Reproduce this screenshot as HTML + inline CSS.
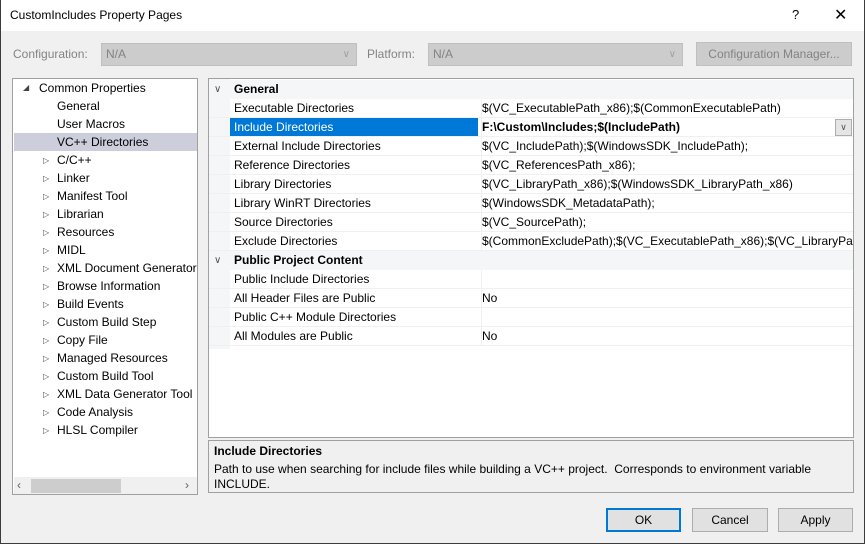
<!DOCTYPE html>
<html><head><style>
*{margin:0;padding:0;box-sizing:border-box}
body{width:865px;height:544px;background:#f0f0f0;font-family:"Liberation Sans",sans-serif;font-size:12px;color:#000;position:relative;overflow:hidden}
.a{position:absolute;white-space:nowrap}
.win{position:absolute;left:0;top:0;width:865px;height:544px;border:1px solid #3c3c3c;border-top:none}
.combo{position:absolute;height:23px;background:#cccccc;border:1px solid #bfbfbf;color:#838383;padding:3px 4px;line-height:15px}
.combo .ch{position:absolute;right:6px;top:3px;color:#a0a0a0;font-size:10px}
.btn{position:absolute;height:24px;background:#e1e1e1;border:1px solid #adadad;text-align:center;line-height:22px}
.tree{position:absolute;left:12px;top:78px;width:186px;height:417px;background:#fff;border:1px solid #a0a0a0}
.ti{position:absolute;height:18px;line-height:18px}
.tri{position:absolute;font-size:8px;color:#444}
.grid{position:absolute;left:208px;top:78px;width:646px;height:360px;background:#fff;border:1px solid #a0a0a0;overflow:hidden}
.row{position:absolute;left:0;width:644px;height:19px;line-height:19px;border-bottom:1px solid #f0f0f0}
.row .n{position:absolute;left:25px}
.row .v{position:absolute;left:272px;border-left:1px solid #f0f0f0;padding-left:0;height:18px}
.gut{position:absolute;left:0;top:0;width:21px;height:270px;background:#f5f6f8}
.hdr{position:absolute;left:0;width:644px;height:19px;background:#f5f6f8;line-height:19px;font-weight:bold}
</style></head><body>
<div style="position:absolute;left:0;top:0;width:865px;height:31px;background:#fff"></div>
<div class="win"></div>
<div class="a" style="left:10px;top:8px;font-size:12px">CustomIncludes Property Pages</div>
<div class="a" style="left:792px;top:7px;font-size:13px">?</div>
<div class="a" style="left:834px;top:5px;font-size:16px">✕</div>

<div class="a" style="left:13px;top:47px;color:#838383">Configuration:</div>
<div class="combo" style="left:101px;top:43px;width:256px">N/A<span class="ch">&#8744;</span></div>
<div class="a" style="left:367px;top:47px;color:#838383">Platform:</div>
<div class="combo" style="left:428px;top:43px;width:255px">N/A<span class="ch">&#8744;</span></div>
<div class="btn" style="left:696px;top:42px;width:156px;background:#cccccc;border-color:#bfbfbf;color:#838383">Configuration Manager...</div>

<div class="tree">
<div class="tri" style="left:10px;top:4px">◢</div>
<div class="ti" style="left:26px;top:0">Common Properties</div>
<div class="ti" style="left:44px;top:18px">General</div>
<div class="ti" style="left:44px;top:36px">User Macros</div>
<div class="ti" style="left:1px;top:54px;width:183px;background:#cccedb;padding-left:43px">VC++ Directories</div>
<div class="ti" style="left:44px;top:72px">C/C++</div>
<div class="ti" style="left:44px;top:90px">Linker</div>
<div class="ti" style="left:44px;top:108px">Manifest Tool</div>
<div class="ti" style="left:44px;top:126px">Librarian</div>
<div class="ti" style="left:44px;top:144px">Resources</div>
<div class="ti" style="left:44px;top:162px">MIDL</div>
<div class="ti" style="left:44px;top:180px">XML Document Generator</div>
<div class="ti" style="left:44px;top:198px">Browse Information</div>
<div class="ti" style="left:44px;top:216px">Build Events</div>
<div class="ti" style="left:44px;top:234px">Custom Build Step</div>
<div class="ti" style="left:44px;top:252px">Copy File</div>
<div class="ti" style="left:44px;top:270px">Managed Resources</div>
<div class="ti" style="left:44px;top:288px">Custom Build Tool</div>
<div class="ti" style="left:44px;top:306px">XML Data Generator Tool</div>
<div class="ti" style="left:44px;top:324px">Code Analysis</div>
<div class="ti" style="left:44px;top:342px">HLSL Compiler</div>
<div class="tri" style="left:30px;top:77px">▷</div><div class="tri" style="left:30px;top:95px">▷</div><div class="tri" style="left:30px;top:113px">▷</div><div class="tri" style="left:30px;top:131px">▷</div><div class="tri" style="left:30px;top:149px">▷</div><div class="tri" style="left:30px;top:167px">▷</div><div class="tri" style="left:30px;top:185px">▷</div><div class="tri" style="left:30px;top:203px">▷</div><div class="tri" style="left:30px;top:221px">▷</div><div class="tri" style="left:30px;top:239px">▷</div><div class="tri" style="left:30px;top:257px">▷</div><div class="tri" style="left:30px;top:275px">▷</div><div class="tri" style="left:30px;top:293px">▷</div><div class="tri" style="left:30px;top:311px">▷</div><div class="tri" style="left:30px;top:329px">▷</div><div class="tri" style="left:30px;top:347px">▷</div>
<div style="position:absolute;left:1px;top:398px;width:183px;height:17px;background:#f0f0f0"></div>
<div style="position:absolute;left:18px;top:400px;width:90px;height:14px;background:#cdcdcd"></div>
<div class="a" style="left:4px;top:399px;color:#606060">‹</div>
<div class="a" style="left:172px;top:399px;color:#606060">›</div>
</div>

<div class="grid">
<div class="gut"></div>
<div class="hdr" style="top:1px"><span style="position:absolute;left:5px;font-weight:normal;color:#555;font-size:10px">&#8744;</span><span style="position:absolute;left:25px">General</span></div>
<div class="row" style="top:20px"><span class="n">Executable Directories</span><span class="v">$(VC_ExecutablePath_x86);$(CommonExecutablePath)</span></div>
<div class="row" style="top:39px"><span class="n" style="left:21px;width:248px;height:18px;background:#0078d7;color:#fff;padding-left:4px">Include Directories</span><span class="v" style="font-weight:bold">F:\Custom\Includes;$(IncludePath)</span><span style="position:absolute;left:626px;top:1px;width:17px;height:17px;background:#e5e5e5;border:1px solid #adadad;text-align:center;font-size:9px;line-height:14px;color:#555">&#8744;</span></div>
<div class="row" style="top:58px"><span class="n">External Include Directories</span><span class="v">$(VC_IncludePath);$(WindowsSDK_IncludePath);</span></div>
<div class="row" style="top:77px"><span class="n">Reference Directories</span><span class="v">$(VC_ReferencesPath_x86);</span></div>
<div class="row" style="top:96px"><span class="n">Library Directories</span><span class="v">$(VC_LibraryPath_x86);$(WindowsSDK_LibraryPath_x86)</span></div>
<div class="row" style="top:115px"><span class="n">Library WinRT Directories</span><span class="v">$(WindowsSDK_MetadataPath);</span></div>
<div class="row" style="top:134px"><span class="n">Source Directories</span><span class="v">$(VC_SourcePath);</span></div>
<div class="row" style="top:153px"><span class="n">Exclude Directories</span><span class="v">$(CommonExcludePath);$(VC_ExecutablePath_x86);$(VC_LibraryPath_x86)</span></div>
<div class="hdr" style="top:172px"><span style="position:absolute;left:5px;font-weight:normal;color:#555;font-size:10px">&#8744;</span><span style="position:absolute;left:25px">Public Project Content</span></div>
<div class="row" style="top:191px"><span class="n">Public Include Directories</span><span class="v"></span></div>
<div class="row" style="top:210px"><span class="n">All Header Files are Public</span><span class="v">No</span></div>
<div class="row" style="top:229px"><span class="n">Public C++ Module Directories</span><span class="v"></span></div>
<div class="row" style="top:248px"><span class="n">All Modules are Public</span><span class="v">No</span></div>
</div>

<div style="position:absolute;left:208px;top:440px;width:646px;height:53px;border:1px solid #a0a0a0;background:#f0f0f0"></div>
<div class="a" style="left:214px;top:444px;font-weight:bold">Include Directories</div>
<div class="a" style="left:214px;top:462px">Path to use when searching for include files while building a VC++ project.&nbsp; Corresponds to environment variable</div>
<div class="a" style="left:214px;top:477px">INCLUDE.</div>

<div class="btn" style="left:606px;top:508px;width:75px;border:2px solid #0078d7;line-height:20px">OK</div>
<div class="btn" style="left:692px;top:508px;width:76px">Cancel</div>
<div class="btn" style="left:778px;top:508px;width:75px">Apply</div>
</body></html>
